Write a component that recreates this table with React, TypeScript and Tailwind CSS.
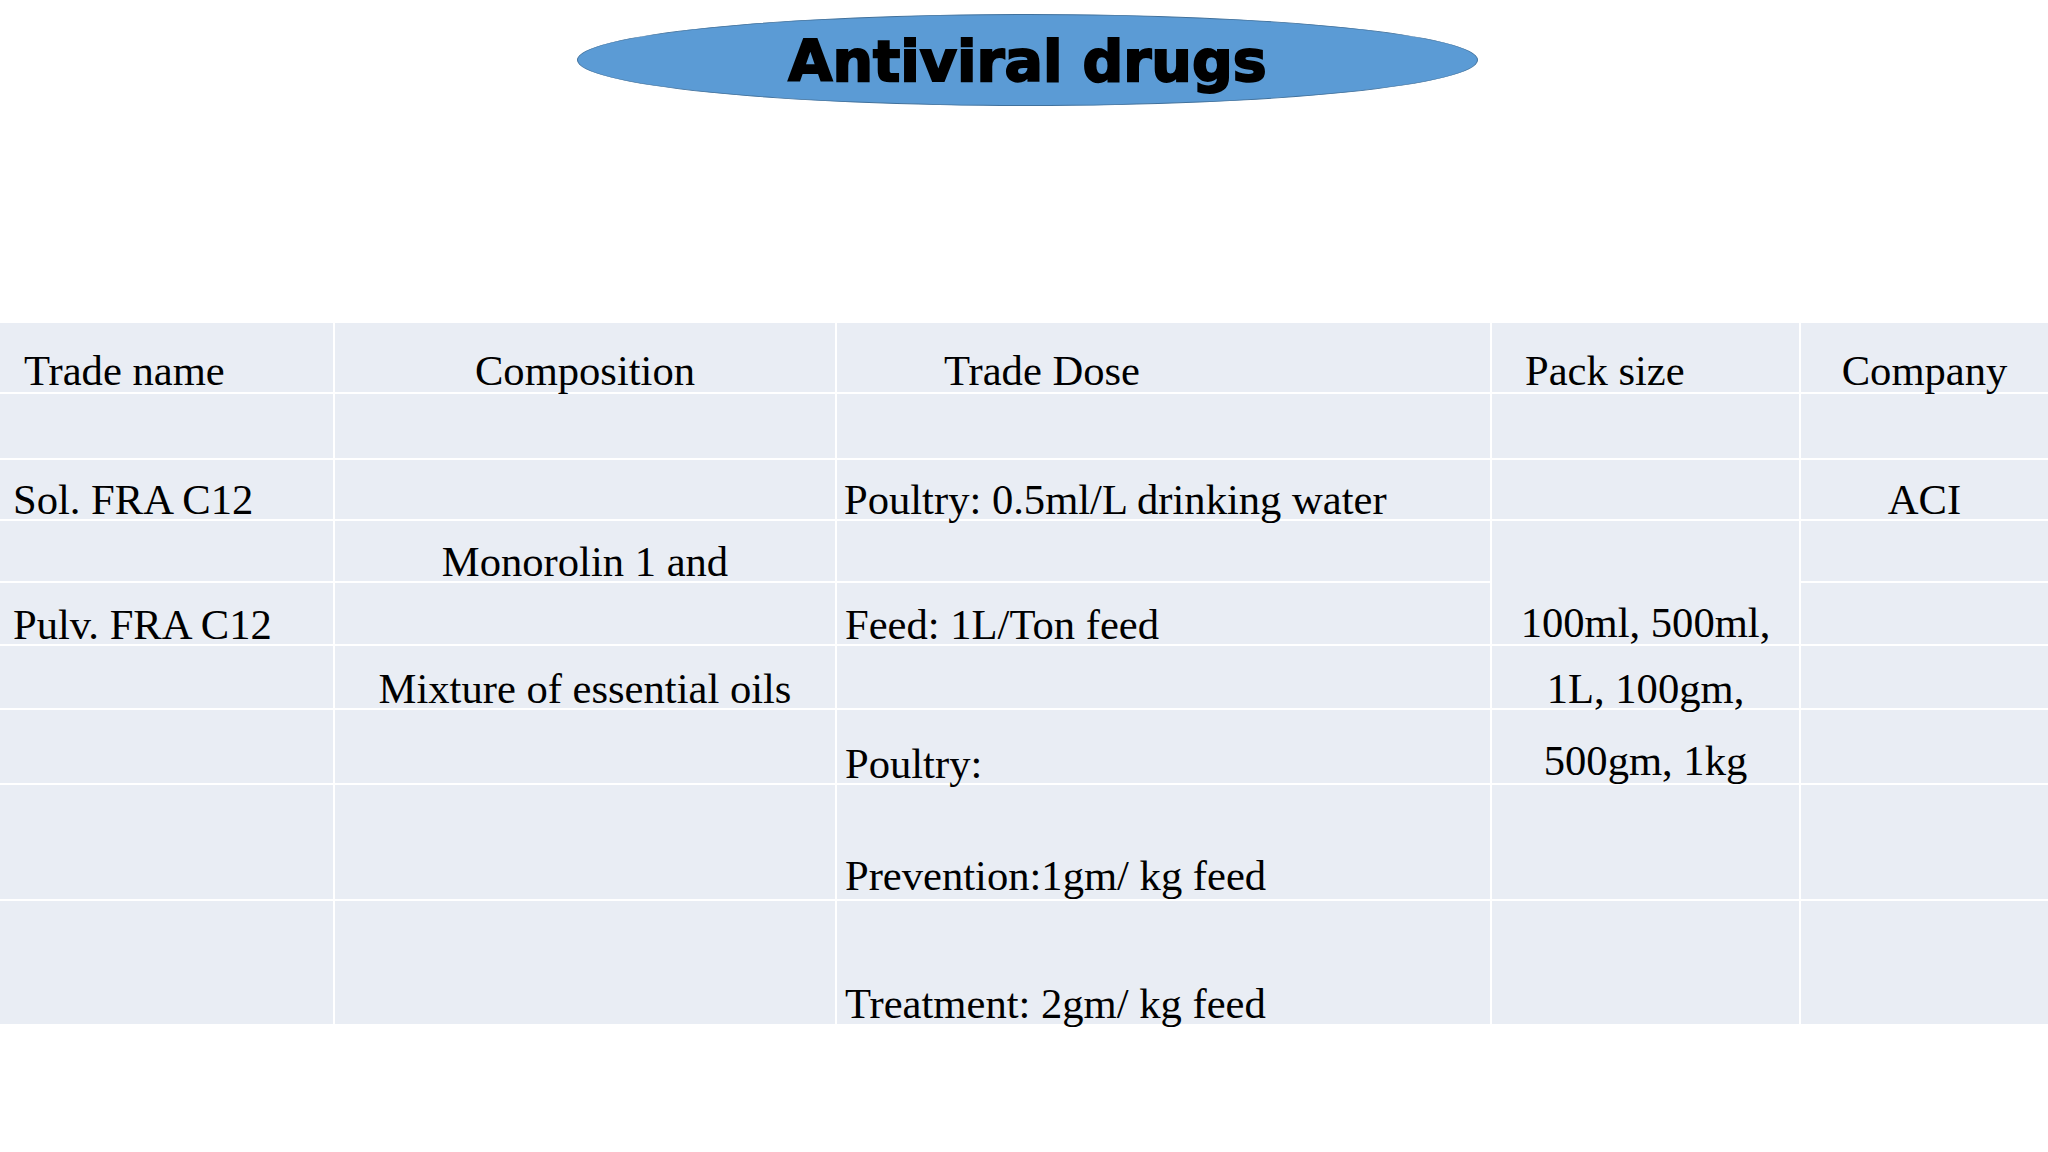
import clsx from "clsx";

type CellProps = {
  children?: React.ReactNode;
  className?: string;
};

function Cell({ children, className }: CellProps) {
  return (
    <div
      className={clsx(
        "flex items-end bg-[#e9edf4] text-[42.6px] leading-[38px] text-black whitespace-nowrap",
        className
      )}
    >
      {children && <span className="relative z-10">{children}</span>}
    </div>
  );
}

export default function App() {
  return (
    <div className="min-h-[1152px] w-[2048px] bg-white font-['Liberation_Serif','Times_New_Roman',serif]">
      <div className="flex pt-[14px] pl-[577px]">
        <div className="flex h-[92px] w-[901px] items-center justify-center rounded-[50%] border-[1.5px] border-[#41719c] bg-[#5b9bd5] pt-[2px]">
          <h1 className="font-['DejaVu_Sans',sans-serif] text-[57px] leading-none font-bold text-black [-webkit-text-stroke:2px_black]">
            Antiviral drugs
          </h1>
        </div>
      </div>

      <div className="mt-[217px] grid grid-cols-[333px_500px_653px_307px_247px] grid-rows-[69px_64px_59px_60px_61px_62px_73px_114px_123px] gap-[2px] bg-white">
        {/* header */}
        <Cell className="pl-[24px] pb-[2px]">Trade name</Cell>
        <Cell className="justify-center pb-[2px]">Composition</Cell>
        <Cell className="pl-[107px] pb-[2px]">Trade Dose</Cell>
        <Cell className="pl-[33px] pb-[2px]">Pack size</Cell>
        <Cell className="justify-center pb-[2px]">Company</Cell>

        <Cell />
        <Cell />
        <Cell />
        <Cell />
        <Cell />

        <Cell className="pl-[13px]">Sol. FRA C12</Cell>
        <Cell />
        <Cell className="pl-[7px]">Poultry: 0.5ml/L drinking water</Cell>
        <Cell />
        <Cell className="justify-center">ACI</Cell>

        <Cell />
        <Cell className="justify-center">Monorolin 1 and</Cell>
        <Cell />
        <Cell className="row-span-2 justify-center pb-[2px]">100ml, 500ml,</Cell>
        <Cell />

        <Cell className="pl-[13px]">Pulv. FRA C12</Cell>
        <Cell />
        <Cell className="pl-[8px]">Feed: 1L/Ton feed</Cell>
        <Cell />

        <Cell />
        <Cell className="justify-center">Mixture of essential oils</Cell>
        <Cell />
        <Cell className="justify-center">1L, 100gm,</Cell>
        <Cell />

        <Cell />
        <Cell />
        <Cell className="pl-[8px]">Poultry:</Cell>
        <Cell className="justify-center pb-[3px]">500gm, 1kg</Cell>
        <Cell />

        <Cell />
        <Cell />
        <Cell className="pl-[8px] pb-[4px]">Prevention:1gm/ kg feed</Cell>
        <Cell />
        <Cell />

        <Cell />
        <Cell />
        <Cell className="pl-[8px] pb-[1px]">Treatment: 2gm/ kg feed</Cell>
        <Cell />
        <Cell />
      </div>
    </div>
  );
}
